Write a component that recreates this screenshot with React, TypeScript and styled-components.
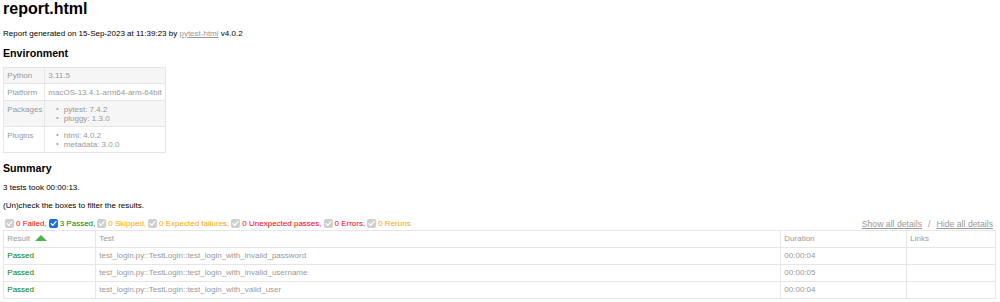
import React from 'react'
import styled, { createGlobalStyle } from 'styled-components'

const GlobalStyle = createGlobalStyle`
  body {
    margin: 0;
    background: #fff;
    font-family: 'Liberation Sans', Arial, Helvetica, sans-serif;
    font-size: 8px;
    color: #999;
  }
`

const Page = styled.div`
  padding: 0 4px 0 3px;
`

const Title = styled.h1`
  margin: 0;
  font-size: 16px;
  line-height: 17px;
  font-weight: bold;
  color: #000;
`

const SectionTitle = styled.h2`
  margin: 9px 0 0;
  font-size: 10.67px;
  line-height: 12px;
  font-weight: bold;
  color: #000;
`

const Text = styled.p<{ $gap?: number }>`
  margin: ${(p) => p.$gap ?? 9}px 0 0;
  line-height: 9px;
  color: #000;
`

const MutedLink = styled.a`
  color: #999;
  text-decoration: underline;
  cursor: pointer;
`

const EnvTable = styled.table`
  margin-top: 8px;
  border-collapse: collapse;
  border: 1px solid #e6e6e6;

  tr:nth-child(odd) {
    background: #f6f6f6;
  }

  td {
    padding: 3.33px;
    border: 1px solid #e6e6e6;
    vertical-align: top;
    line-height: 9.2px;
  }

  td:first-child {
    padding-right: 1.5px;
  }
`

const List = styled.ul`
  margin: 0;
  padding-left: 8px;
  list-style: none;
  line-height: 9.2px;

  li::before {
    content: '•';
    display: inline-block;
    width: 7.5px;
    line-height: 0;
    vertical-align: top;
    padding-top: 4.6px;
    font-size: 6.5px;
  }
`

const FilterBar = styled.div`
  margin-top: 9px;
  display: flex;
  align-items: center;
  justify-content: space-between;
  height: 10px;
`

const Filters = styled.div`
  display: flex;
  align-items: center;
  gap: 2px;
  padding-left: 2px;
`

const FilterItem = styled.label`
  display: flex;
  align-items: center;
  gap: 2px;
  white-space: pre;
`

const Box = styled.span<{ $checked: boolean }>`
  width: 9px;
  height: 9px;
  border-radius: 2px;
  background: ${(p) => (p.$checked ? '#1a6fe0' : '#cfcfcf')};
  display: inline-flex;
  align-items: center;
  justify-content: center;
`

const Outcome = styled.span<{ $color: string }>`
  color: ${(p) => p.$color};
`

const DetailLinks = styled.div`
  font-size: 8.7px;
  display: flex;
  gap: 6px;
  padding-right: 3px;
`

const ResultsTable = styled.table`
  margin-top: 1px;
  width: 100%;
  table-layout: fixed;
  border-collapse: collapse;
  border: 1px solid #e6e6e6;

  th,
  td {
    padding: 3.33px;
    border: 1px solid #e6e6e6;
    text-align: left;
    font-weight: normal;
    line-height: 9px;
    white-space: nowrap;
  }

  td {
    line-height: 9.5px;
  }
`

const SortArrow = styled.span`
  display: inline-block;
  margin-left: 5px;
  border-left: 6px solid transparent;
  border-right: 6px solid transparent;
  border-bottom: 6px solid #4caf50;
  vertical-align: 0px;
`

const Passed = styled.td`
  color: green;
`

const colors = { red: 'red', green: 'green', orange: 'orange' }

const filters = [
  { label: '0 Failed,', color: colors.red, checked: false },
  { label: '3 Passed,', color: colors.green, checked: true },
  { label: '0 Skipped,', color: colors.orange, checked: false },
  { label: '0 Expected failures,', color: colors.orange, checked: false },
  { label: '0 Unexpected passes,', color: colors.red, checked: false },
  { label: '0 Errors,', color: colors.red, checked: false },
  { label: '0 Reruns', color: colors.orange, checked: false },
]

const results = [
  { test: 'test_login.py::TestLogin::test_login_with_invalid_password', duration: '00:00:04' },
  { test: 'test_login.py::TestLogin::test_login_with_invalid_username', duration: '00:00:05' },
  { test: 'test_login.py::TestLogin::test_login_with_valid_user', duration: '00:00:04' },
]

function Check({ checked }: { checked: boolean }) {
  return (
    <Box $checked={checked}>
      <svg width="7" height="7" viewBox="0 0 10 10">
        <path d="M1.5 5.2 L4 7.6 L8.6 2.2" fill="none" stroke="#fff" strokeWidth="1.8" strokeLinecap="round" strokeLinejoin="round" />
      </svg>
    </Box>
  )
}

export default function App() {
  return (
    <Page>
      <GlobalStyle />
      <Title>report.html</Title>
      <Text $gap={11.5}>
        Report generated on 15-Sep-2023 at 11:39:23 by <MutedLink>pytest-html</MutedLink> v4.0.2
      </Text>

      <SectionTitle>Environment</SectionTitle>
      <EnvTable>
        <tbody>
          <tr>
            <td>Python</td>
            <td>3.11.5</td>
          </tr>
          <tr>
            <td>Platform</td>
            <td>macOS-13.4.1-arm64-arm-64bit</td>
          </tr>
          <tr>
            <td>Packages</td>
            <td>
              <List>
                <li>pytest: 7.4.2</li>
                <li>pluggy: 1.3.0</li>
              </List>
            </td>
          </tr>
          <tr>
            <td>Plugins</td>
            <td>
              <List>
                <li>html: 4.0.2</li>
                <li>metadata: 3.0.0</li>
              </List>
            </td>
          </tr>
        </tbody>
      </EnvTable>

      <SectionTitle>Summary</SectionTitle>
      <Text $gap={8.5}>3 tests took 00:00:13.</Text>
      <Text>(Un)check the boxes to filter the results.</Text>

      <FilterBar>
        <Filters>
          {filters.map((f) => (
            <FilterItem key={f.label}>
              <Check checked={f.checked} />
              <Outcome $color={f.color}>{f.label}</Outcome>
            </FilterItem>
          ))}
        </Filters>
        <DetailLinks>
          <MutedLink>Show all details</MutedLink>
          <span>/</span>
          <MutedLink>Hide all details</MutedLink>
        </DetailLinks>
      </FilterBar>

      <ResultsTable>
        <colgroup>
          <col style={{ width: 92 }} />
          <col style={{ width: 685 }} />
          <col style={{ width: 126 }} />
          <col />
        </colgroup>
        <thead>
          <tr>
            <th>
              Result
              <SortArrow />
            </th>
            <th>Test</th>
            <th>Duration</th>
            <th>Links</th>
          </tr>
        </thead>
        <tbody>
          {results.map((r) => (
            <tr key={r.test}>
              <Passed>Passed</Passed>
              <td>{r.test}</td>
              <td>{r.duration}</td>
              <td />
            </tr>
          ))}
        </tbody>
      </ResultsTable>
    </Page>
  )
}
